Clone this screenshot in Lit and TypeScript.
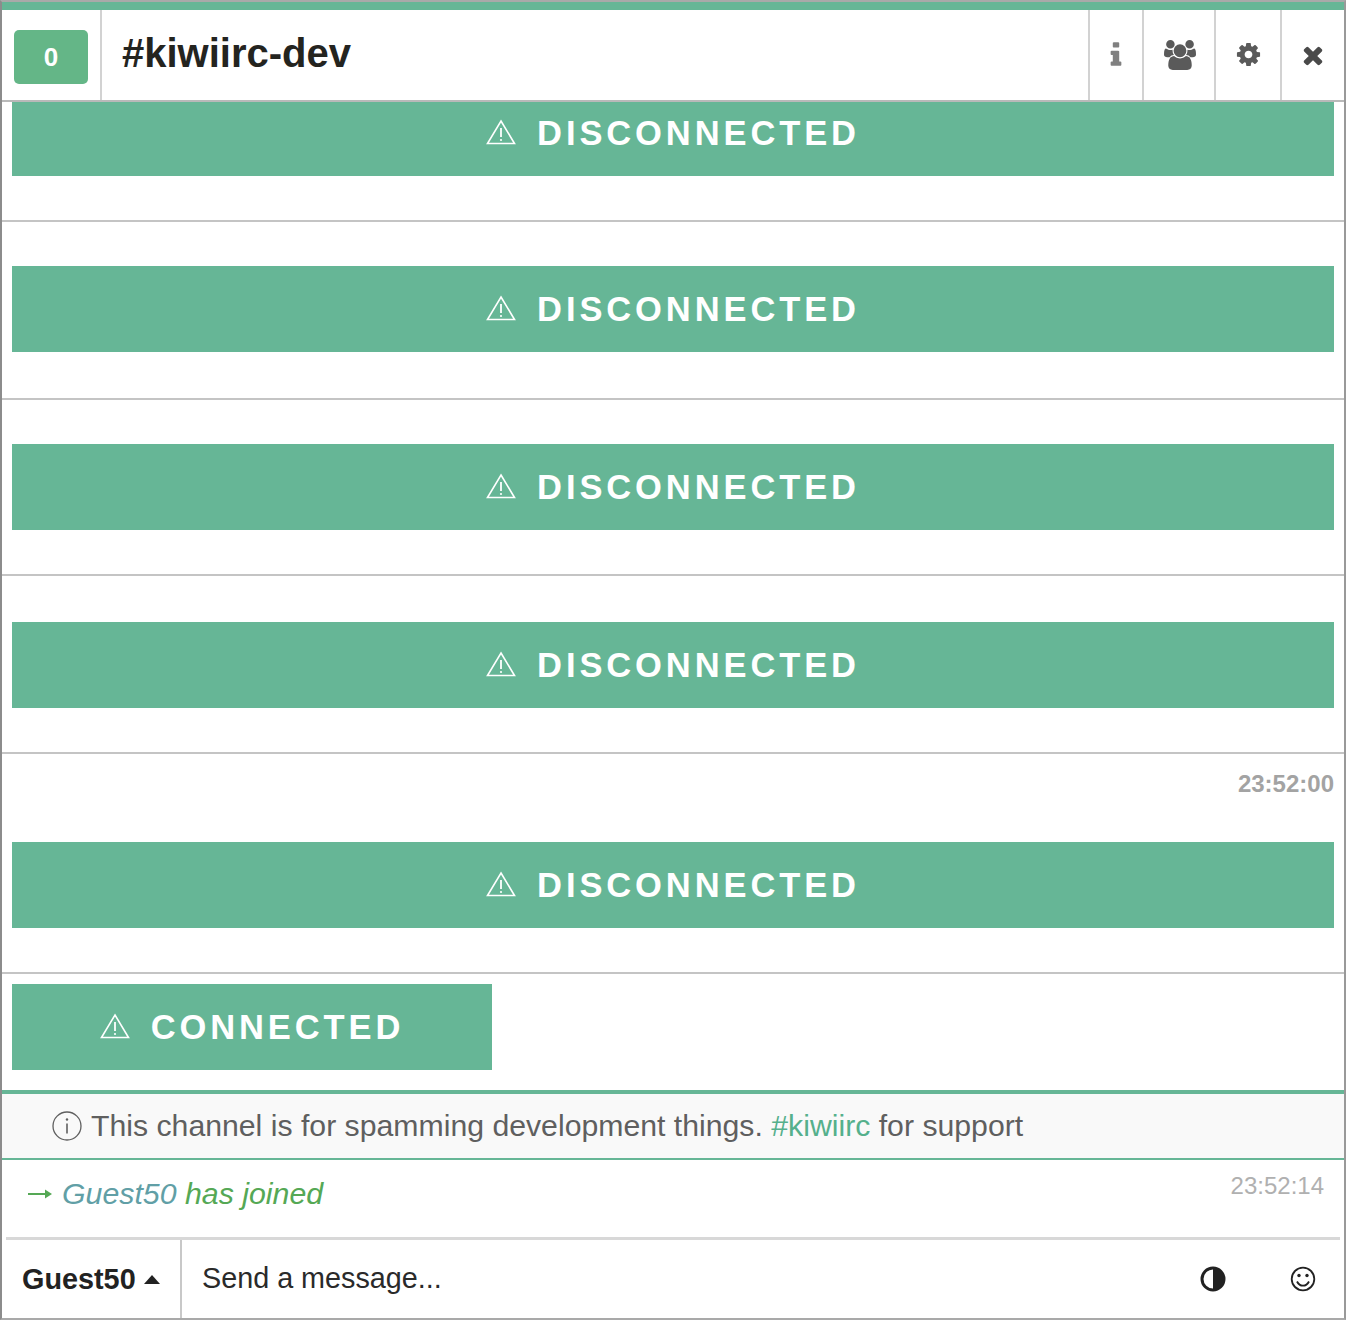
import { LitElement, html, css, svg } from "lit";
import { customElement } from "lit/decorators.js";

const warn = svg`<svg class="warn" viewBox="0 0 30 26" width="30" height="26"><path d="M15 2 L28.5 24.5 H1.5 Z" fill="none" stroke="#fff" stroke-width="1.6" stroke-linejoin="miter"/><path d="M15 9v9" stroke="#fff" stroke-width="1.8"/><circle cx="15" cy="21" r="1.1" fill="#fff"/></svg>`;

const rows = [
  { top: -12, bottom: 44 },
  { top: 44, bottom: 46 },
  { top: 44, bottom: 44 },
  { top: 46, bottom: 44 },
  { top: 0, bottom: 44, time: "23:52:00" },
];

@customElement("app-root")
export class AppRoot extends LitElement {
  static styles = css`
    :host { display: block; width: 1346px; height: 1322px; background: #fff; font-family: "Liberation Sans", Arial, sans-serif; color: #222; overflow: hidden; }
    .frame { box-sizing: border-box; height: 1320px; display: flex; flex-direction: column; border: 2px solid #a9a9a9; border-left-color: #8c8c8c; border-right-color: #999; }
    .stripe { height: 8px; background: #66b696; flex: none; }
    .head { height: 90px; flex: none; display: flex; align-items: stretch; border-bottom: 2px solid #b9b9b9; box-sizing: content-box; }
    .badgewrap { width: 100px; box-sizing: border-box; border-right: 2px solid #d2d2d2; padding: 20px 0 0 12px; }
    .badge { width: 74px; height: 54px; border-radius: 5px; background: #64b687; color: #fff; font-weight: 700; font-size: 26px; display: flex; align-items: center; justify-content: center; }
    .title { flex: 1; font-size: 40px; font-weight: 700; color: #24241f; padding: 21px 0 0 20px; line-height: 44px; }
    .btn { box-sizing: border-box; border-left: 2px solid #d2d2d2; display: flex; align-items: center; justify-content: center; }
    .btn svg { display: block; }
    .b1 { width: 54px; } .b2 { width: 72px; padding-left: 2px; } .b3 { width: 66px; padding-bottom: 2px; } .b4 { width: 64px; padding-bottom: 1px; }
    .list { flex: 1; min-height: 0; overflow: hidden; }
    .row { border-bottom: 2px solid #c4c4c4; padding: 0 10px; }
    .stamp { text-align: right; font-size: 24px; font-weight: 700; color: #a3a3a3; height: 88px; padding-top: 16px; box-sizing: border-box; line-height: 28px; }
    .banner { height: 86px; background: #66b696; color: #fff; display: flex; align-items: center; justify-content: center; font-weight: 700; font-size: 34.5px; letter-spacing: 3.9px; gap: 21px; }
    .banner .warn { flex: none; margin-top: -3px; }
    .conn { padding: 10px 10px 20px; }
    .conn .banner { width: 480px; }
    .topic { height: 64px; box-sizing: content-box; flex: none; background: #f9f9f9; border-top: 4px solid #66b696; border-bottom: 2px solid #66b696; display: flex; align-items: center; padding-left: 50px; font-size: 30.23px; color: #5f5f5f; gap: 9px; }
    .topic a { color: #55b08c; text-decoration: none; }
    .topic span { white-space: pre; }
    .join { height: 77px; flex: none; box-sizing: border-box; display: flex; align-items: center; padding: 0 20px 10px 26px; gap: 10px; font-style: italic; font-size: 30.3px; color: #55a855; }
    .join .nick { color: #619fa6; }
    .join .t { margin-left: auto; align-self: flex-start; margin-top: 12px; font-style: normal; font-size: 24px; color: #b0b0b0; }
    .rule { height: 3px; flex: none; margin: 0 4px; background: #d8d8d8; }
    .ctrl { height: 78px; flex: none; display: flex; align-items: stretch; }
    .me { width: 180px; box-sizing: border-box; border-right: 2px solid #c8c8c8; display: flex; align-items: center; padding-left: 20px; gap: 8px; font-size: 28.8px; font-weight: 700; color: #222; }
    .msg { flex: 1; padding: 0 0 2px 20px; display: flex; align-items: center; font-size: 28.75px; color: #2a2a2a; }
    .tools { display: flex; align-items: center; gap: 64px; padding-right: 28px; }
  `;

  render() {
    return html`<div class="frame">
      <div class="stripe"></div>
      <div class="head">
        <div class="badgewrap"><div class="badge">0</div></div>
        <div class="title">#kiwiirc-dev</div>
        <div class="btn b1"><svg width="30" height="30" viewBox="0 0 1792 1792" fill="#808080"><path d="M1216 1344v128q0 26-19 45t-45 19h-512q-26 0-45-19t-19-45v-128q0-26 19-45t45-19h64v-384h-64q-26 0-45-19t-19-45v-128q0-26 19-45t45-19h384q26 0 45 19t19 45v576h64q26 0 45 19t19 45zm-128-1152v192q0 26-19 45t-45 19h-256q-26 0-45-19t-19-45v-192q0-26 19-45t45-19h256q26 0 45 19t19 45z"/></svg></div>
        <div class="btn b2"><svg width="32" height="30" viewBox="-64 0 1920 1792" fill="#5a5a5a"><path d="M529 896q-162 5-265 128h-134q-82 0-138-40.5t-56-118.5q0-353 124-353 6 0 43.5 21t97.5 42.5 119 21.5q67 0 133-23-5 37-5 66 0 139 81 256zm1071 637q0 120-73 189.5t-194 69.5h-874q-121 0-194-69.5t-73-189.5q0-53 3.5-103.5t14-109 26.5-108.5 43-97.5 62-81 85.5-53.5 111.5-20q10 0 43 21.5t73 48 107 48 135 21.5 135-21.5 107-48 73-48 43-21.5q61 0 111.5 20t85.5 53.5 62 81 43 97.5 26.5 108.5 14 109 3.5 103.5zm-1024-1277q0 106-75 181t-181 75-181-75-75-181 75-181 181-75 181 75 75 181zm704 384q0 159-112.5 271.5t-271.5 112.5-271.5-112.5-112.5-271.5 112.5-271.5 271.5-112.5 271.5 112.5 112.5 271.5zm576 225q0 78-56 118.5t-138 40.5h-134q-103-123-265-128 81-117 81-256 0-29-5-66 66 23 133 23 59 0 119-21.5t97.5-42.5 43.5-21q124 0 124 353zm-128-609q0 106-75 181t-181 75-181-75-75-181 75-181 181-75 181 75 75 181z"/></svg></div>
        <div class="btn b3"><svg width="27" height="27" viewBox="0 0 1792 1792" fill="#5a5a5a"><path d="M1152 896q0-106-75-181t-181-75-181 75-75 181 75 181 181 75 181-75 75-181zm512-109v222q0 12-8 23t-20 13l-185 28q-19 54-39 91 35 50 107 138 10 12 10 25t-9 23q-27 37-99 108t-94 71q-12 0-26-9l-138-108q-44 23-91 38-16 136-29 186-7 28-36 28h-222q-14 0-24.5-8.5t-11.5-21.5l-28-184q-49-16-90-37l-141 107q-10 9-25 9-14 0-25-11-126-114-165-168-7-10-7-23 0-12 8-23 15-21 51-66.5t54-70.5q-27-50-41-99l-183-27q-13-2-21-12.5t-8-23.5v-222q0-12 8-23t19-13l186-28q14-46 39-92-40-57-107-138-10-12-10-24 0-10 9-23 26-36 98.5-107.5t94.5-71.5q13 0 26 10l138 107q44-23 91-38 16-136 29-186 7-28 36-28h222q14 0 24.5 8.5t11.5 21.5l28 184q49 16 90 37l142-107q9-9 24-9 13 0 25 10 129 119 165 170 7 8 7 22 0 12-8 23-15 21-51 66.5t-54 70.5q26 50 41 98l183 28q13 2 21 12.5t8 23.5z"/></svg></div>
        <div class="btn b4"><svg width="28" height="28" viewBox="0 0 1792 1792" fill="#4a4a4a"><path d="M1490 1322q0 40-28 68l-136 136q-28 28-68 28t-68-28l-294-294-294 294q-28 28-68 28t-68-28l-136-136q-28-28-28-68t28-68l294-294-294-294q-28-28-28-68t28-68l136-136q28-28 68-28t68 28l294 294 294-294q28-28 68-28t68 28l136 136q28 28 28 68t-28 68l-294 294 294 294q28 28 28 68z"/></svg></div>
      </div>
      <div class="list">
        ${rows.map(
          (r) => html`<div class="row" style="padding-top:${Math.max(r.top, 0)}px;padding-bottom:${r.bottom}px;margin-top:${Math.min(r.top, 0)}px">
            ${r.time ? html`<div class="stamp">${r.time}</div>` : ""}
            <div class="banner">${warn}<span>DISCONNECTED</span></div>
          </div>`
        )}
        <div class="conn"><div class="banner">${warn}<span>CONNECTED</span></div></div>
      </div>
      <div class="topic">
        <svg width="30" height="30" viewBox="0 0 30 30"><circle cx="15" cy="15" r="14" fill="none" stroke="#5f5f5f" stroke-width="1.3"/><path d="M15 12.5v10" stroke="#5f5f5f" stroke-width="1.6"/><circle cx="15" cy="8.5" r="1.2" fill="#5f5f5f"/></svg>
        <span>This channel is for spamming development things. <a href="#">#kiwiirc</a> for support</span>
      </div>
      <div class="join">
        <svg width="24" height="14" viewBox="0 0 24 14"><path d="M0 7H22" stroke="#55a855" stroke-width="2"/><path d="M17 2.5 24 7 17 11.5Z" fill="#55a855"/></svg>
        <span><span class="nick">Guest50</span> has joined</span>
        <span class="t">23:52:14</span>
      </div>
      <div class="rule"></div>
      <div class="ctrl">
        <div class="me">Guest50<svg width="16" height="9" viewBox="0 0 16 9"><path d="M8 0 16 9H0Z" fill="#222"/></svg></div>
        <div class="msg">Send a message...</div>
        <div class="tools">
          <svg width="26" height="26" viewBox="0 0 26 26"><circle cx="13" cy="13" r="11" fill="#fff" stroke="#222" stroke-width="3"/><path d="M13 2a11 11 0 0 1 0 22Z" fill="#222"/></svg>
          <svg width="26" height="26" viewBox="0 0 26 26" fill="none" stroke="#222"><circle cx="13" cy="13" r="11.3" stroke-width="1.8"/><path d="M7 15.5c1.5 3 3.7 4.2 6 4.2s4.5-1.2 6-4.2" stroke-width="1.8"/><circle cx="9" cy="9.5" r="1.7" fill="#222" stroke="none"/><circle cx="17" cy="9.5" r="1.7" fill="#222" stroke="none"/></svg>
        </div>
      </div>
    </div>`;
  }
}
